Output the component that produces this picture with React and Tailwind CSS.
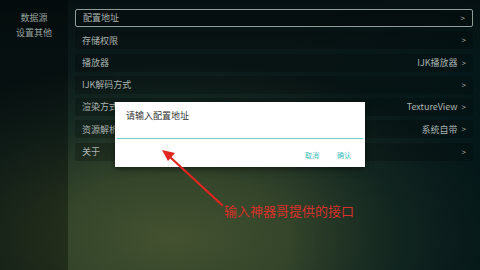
import React from 'react';

const rows = [
  { label: '配置地址', value: '', active: true },
  { label: '存储权限', value: '' },
  { label: '播放器', value: 'IJK播放器' },
  { label: 'IJK解码方式', value: '' },
  { label: '渲染方式', value: 'TextureView' },
  { label: '资源解析', value: '系统自带' },
  { label: '关于', value: '' },
];

const App = () => {
  return (
    <div
      className="relative w-[480px] h-[270px] overflow-hidden flex bg-[radial-gradient(ellipse_70%_65%_at_36%_88%,#445230_0%,#34452a_35%,#182b23_70%,#0b1a1a_100%)]"
      style={{ fontFamily: '"Noto Sans CJK SC", "Noto Sans", sans-serif' }}
    >
      <div className="absolute inset-0 bg-[linear-gradient(90deg,rgba(0,0,0,0)_0%,rgba(0,0,0,0)_60%,rgba(0,22,24,0.55)_100%)]"></div>
      <div className="absolute inset-x-0 top-0 h-[60px] bg-[linear-gradient(180deg,rgba(6,14,16,0.7)_0%,rgba(6,14,16,0)_100%)]"></div>

      <aside className="relative w-[68px] shrink-0 bg-black/35 flex flex-col items-center pt-[11px] gap-[1px] text-[9px] leading-[14px] text-[#95a19d]">
        <div>数据源</div>
        <div>设置其他</div>
      </aside>

      <main className="relative flex-1 pl-[7px] pr-[7px] pt-[9px] flex flex-col gap-[4.3px]">
        {rows.map(r => (
          <div
            key={r.label}
            className={`h-[18px] flex items-center justify-between px-[7px] text-[9px] text-[#aab3b0] rounded-[2px] ${r.active ? 'border border-[#8f9c98] bg-black/25' : 'bg-black/20'}`}
          >
            <span>{r.label}</span>
            <span className="flex items-center gap-[4px]">
              {r.value && <span>{r.value}</span>}
              <span className="text-[8px]">&gt;</span>
            </span>
          </div>
        ))}
      </main>

      <div className="absolute left-[115px] top-[102px] w-[250px] h-[65px] bg-white shadow-[0_2px_6px_rgba(0,0,0,0.5)] flex flex-col">
        <div className="pl-[11px] pt-[7px] text-[9px] leading-[14px] text-[#333]">请输入配置地址</div>
        <div className="mx-[2px] mt-[15px] h-[1px] bg-[#6fd3d0]"></div>
        <div className="flex justify-end gap-[18px] pr-[14px] pt-[11px] text-[7px] text-[#3bbdb8]">
          <span>取消</span>
          <span>确认</span>
        </div>
      </div>

      <svg className="absolute left-0 top-0" width="480" height="270" viewBox="0 0 480 270">
        <line x1="222" y1="205" x2="170" y2="157" stroke="#e0261e" strokeWidth="2.2" strokeLinecap="round" />
        <polygon points="162,150 175,153 168,161" fill="#e0261e" />
      </svg>

      <div className="absolute left-[224px] top-[202px] text-[13px] leading-[18px] text-[#d8302a]">输入神器哥提供的接口</div>
    </div>
  );
};

export default App;
